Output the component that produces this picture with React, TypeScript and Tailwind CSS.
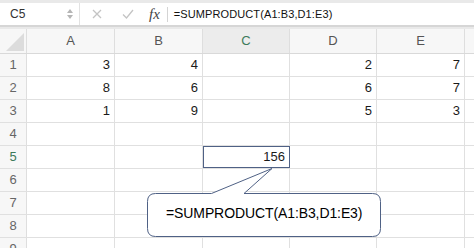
import React from 'react';

const cols = ['A', 'B', 'C', 'D', 'E'];
const colWidths = ['w-[88px]', 'w-[88px]', 'w-[87px]', 'w-[87px]', 'w-[88px]'];

// values keyed by row -> column index
const data: Record<number, (string | null)[]> = {
  1: ['3', '4', null, '2', '7'],
  2: ['8', '6', null, '6', '7'],
  3: ['1', '9', null, '5', '3'],
  5: [null, null, '156', null, null],
};

const rows = [1, 2, 3, 4, 5, 6, 7, 8, 9];

const FormulaBar: React.FC = () => (
  <div className="h-[29px] bg-[#e9e9e9] pt-[3px]">
    <div className="h-[24px] bg-white border-b-2 border-[#d6d6d6] flex items-center">
      {/* Name box */}
      <div className="w-[80px] h-full flex items-center border-r border-[#e2e2e2] pl-[10px] pr-[6px] box-border">
        <span className="text-[12px] text-[#333]">C5</span>
        <div className="ml-auto flex flex-col items-center gap-[2px]">
          <svg width="6" height="4" viewBox="0 0 6 4"><path d="M3 0 L6 4 L0 4 Z" fill="#b5b5b5" /></svg>
          <svg width="6" height="4" viewBox="0 0 6 4"><path d="M0 0 L6 0 L3 4 Z" fill="#b5b5b5" /></svg>
        </div>
      </div>
      {/* cancel / enter / fx */}
      <svg className="ml-[12px]" width="10" height="10" viewBox="0 0 10 10">
        <path d="M1 1 L9 9 M9 1 L1 9" stroke="#c4c4c4" strokeWidth="1.3" />
      </svg>
      <svg className="ml-[20px]" width="12" height="10" viewBox="0 0 12 10">
        <path d="M1 5.5 L4.5 9 L11 1" stroke="#c4c4c4" strokeWidth="1.3" fill="none" />
      </svg>
      <span className="ml-[15px] text-[15px] italic text-[#444] leading-none" style={{ fontFamily: '"Liberation Serif", serif' }}>
        fx
      </span>
      <div className="ml-[7px] w-px h-[15px] bg-[#d4d4d4]" />
      <span className="ml-[6px] text-[11px] font-medium text-[#111] tracking-[0.1px]">=SUMPRODUCT(A1:B3,D1:E3)</span>
    </div>
  </div>
);

const Callout: React.FC = () => (
  <div className="absolute left-[146px] top-[166px] w-[236px] h-[73px]">
    <svg className="absolute inset-0" width="236" height="73" viewBox="0 0 236 73">
      <path
        d="M9.5 27.5 L65.5 27.5 L126 2.5 L98 27.5 L226.5 27.5 Q234.5 27.5 234.5 35.5 L234.5 62.5 Q234.5 70.5 226.5 70.5 L9.5 70.5 Q1.5 70.5 1.5 62.5 L1.5 35.5 Q1.5 27.5 9.5 27.5 Z"
        fill="white"
        stroke="#4f6185"
        strokeWidth="1"
      />
    </svg>
    <div className="absolute left-[20px] top-[40px] text-[14px] leading-none text-black tracking-[-0.1px]">
      =SUMPRODUCT(A1:B3,D1:E3)
    </div>
  </div>
);

export default function App() {
  return (
    <div className="relative w-[474px] h-[248px] overflow-hidden bg-white" style={{ fontFamily: '"Liberation Sans", Arial, sans-serif' }}>
      <FormulaBar />

      {/* column header row */}
      <div className="flex h-[25px] border-b border-[#d9d9d9] bg-[#f7f7f7]">
        <div className="w-[27px] h-full border-r border-[#dedede] relative">
          <svg className="absolute right-[2px] bottom-[2px]" width="18" height="18" viewBox="0 0 18 18">
            <path d="M18 0 L18 18 L0 18 Z" fill="#dcdcdc" />
          </svg>
        </div>
        {cols.map((c, i) => (
          <div
            key={c}
            className={`${colWidths[i]} h-full border-r border-[#dedede] flex items-center justify-center text-[13px] ${
              c === 'C' ? 'bg-[#ececec] text-[#3c7a5a]' : 'text-[#555]'
            }`}
          >
            {c}
          </div>
        ))}
        <div className="flex-1" />
      </div>

      {/* rows */}
      {rows.map((r) => (
        <div key={r} className="flex h-[23px] border-b border-[#e0e0e0]">
          <div
            className={`w-[27px] h-full border-r border-[#dedede] bg-[#f7f7f7] flex items-center justify-center text-[13px] ${
              r === 5 ? 'text-[#3c7a5a] bg-[#ececec]' : 'text-[#666]'
            }`}
          >
            {r}
          </div>
          {cols.map((c, i) => {
            const v = data[r]?.[i];
            const selected = r === 5 && c === 'C';
            return (
              <div
                key={c}
                className={`${colWidths[i]} h-full border-r border-[#e0e0e0] flex items-center justify-end pr-[4px] text-[13px] text-[#1a1a1a] ${
                  selected ? 'outline outline-1 outline-[#4f6185] -outline-offset-1' : ''
                }`}
              >
                {v}
              </div>
            );
          })}
          <div className="flex-1" />
        </div>
      ))}

      <Callout />
    </div>
  );
}
